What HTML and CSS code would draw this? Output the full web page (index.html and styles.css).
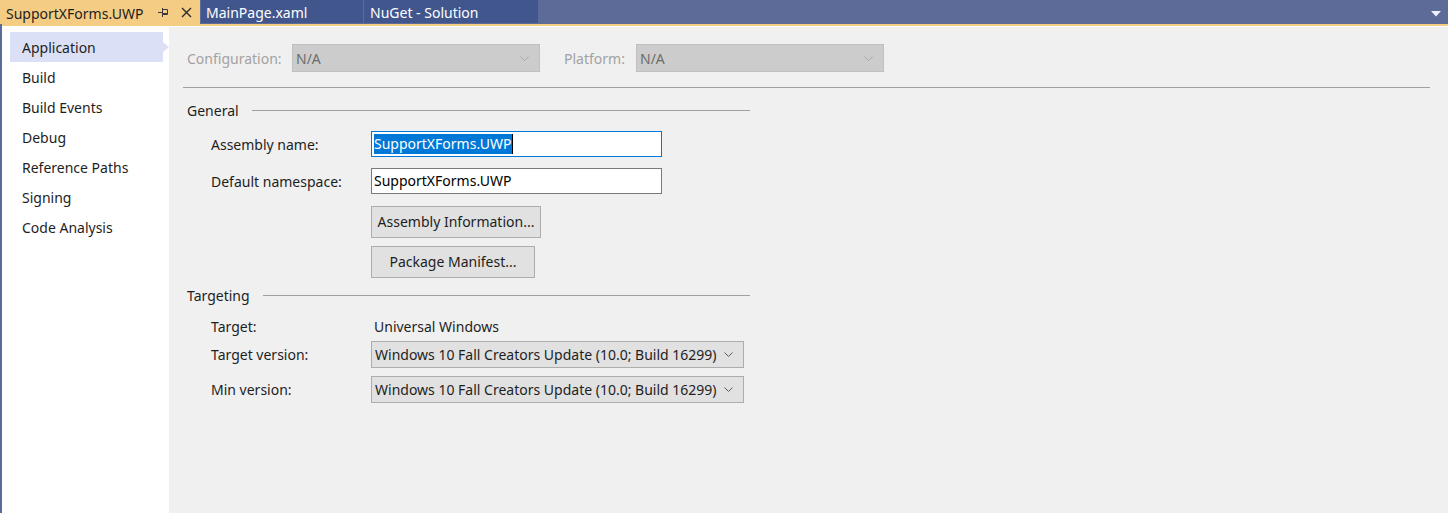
FILE: index.html
```html
<!DOCTYPE html>
<html lang="en">
<head>
    <meta charset="UTF-8">
    <title>SupportXForms.UWP</title>
    <link rel="stylesheet" href="styles.css">
</head>
<body>

    <div class="tabbar">
        <div class="tab tab-active">
            <span class="tab-title">SupportXForms.UWP</span>
            <svg class="tab-pin" width="11" height="10" viewBox="0 0 11 10">
                <path d="M0 5.5H4M4.5 1V10M4.5 2.5H9.5V7.5H4.5M5 6.5H9.5" stroke="#3b3b3b" stroke-width="1" fill="none"/>
            </svg>
            <svg class="tab-close" width="11" height="11" viewBox="0 0 11 11">
                <path d="M1 1L10 10M10 1L1 10" stroke="#2b2b2b" stroke-width="1.4" fill="none"/>
            </svg>
        </div>
        <div class="tab tab-main">MainPage.xaml</div>
        <div class="tab tab-nuget">NuGet - Solution</div>
        <div class="tabbar-fill"></div>
        <svg class="tab-menu" width="10" height="6" viewBox="0 0 10 6">
            <path d="M0 0H10L5 5.5Z" fill="#eef1ff"/>
        </svg>
    </div>

    <div class="main">
        <div class="nav">
            <div class="nav-item nav-selected">Application</div>
            <div class="nav-item">Build</div>
            <div class="nav-item">Build Events</div>
            <div class="nav-item">Debug</div>
            <div class="nav-item">Reference Paths</div>
            <div class="nav-item">Signing</div>
            <div class="nav-item">Code Analysis</div>
        </div>

        <div class="content">
            <div class="config-row">
                <span class="label-disabled">Configuration:</span>
                <div class="select select-disabled">
                    <span>N/A</span>
                    <svg class="chevron" width="9" height="5" viewBox="0 0 9 5"><path d="M0.5 0.5L4.5 4.5L8.5 0.5" stroke="#a8a8a8" fill="none"/></svg>
                </div>
                <span class="label-disabled label-platform">Platform:</span>
                <div class="select select-disabled">
                    <span>N/A</span>
                    <svg class="chevron" width="9" height="5" viewBox="0 0 9 5"><path d="M0.5 0.5L4.5 4.5L8.5 0.5" stroke="#a8a8a8" fill="none"/></svg>
                </div>
            </div>
            <div class="rule"></div>

            <div class="section">
                <div class="section-head">
                    <span>General</span>
                    <div class="section-line"></div>
                </div>
                <div class="row row-assembly">
                    <div class="row-label">Assembly name:</div>
                    <div class="textbox textbox-focus"><span class="selected-text">SupportXForms.UWP</span><span class="caret"></span></div>
                </div>
                <div class="row row-namespace">
                    <div class="row-label">Default namespace:</div>
                    <div class="textbox">SupportXForms.UWP</div>
                </div>
                <div class="row row-button1">
                    <div class="row-label"></div>
                    <div class="button button-info">Assembly Information...</div>
                </div>
                <div class="row row-button2">
                    <div class="row-label"></div>
                    <div class="button button-manifest">Package Manifest...</div>
                </div>

                <div class="section-head section-targeting">
                    <span>Targeting</span>
                    <div class="section-line"></div>
                </div>
                <div class="row row-target">
                    <div class="row-label">Target:</div>
                    <div class="row-value">Universal Windows</div>
                </div>
                <div class="row row-version">
                    <div class="row-label">Target version:</div>
                    <div class="select select-version">
                        <span>Windows 10 Fall Creators Update (10.0; Build 16299)</span>
                        <svg class="chevron" width="9" height="5" viewBox="0 0 9 5"><path d="M0.5 0.5L4.5 4.5L8.5 0.5" stroke="#5a5a5a" fill="none"/></svg>
                    </div>
                </div>
                <div class="row row-min">
                    <div class="row-label">Min version:</div>
                    <div class="select select-version">
                        <span>Windows 10 Fall Creators Update (10.0; Build 16299)</span>
                        <svg class="chevron" width="9" height="5" viewBox="0 0 9 5"><path d="M0.5 0.5L4.5 4.5L8.5 0.5" stroke="#5a5a5a" fill="none"/></svg>
                    </div>
                </div>
            </div>
        </div>
    </div>

</body>
</html>
```

FILE: styles.css
```css
* {
    margin: 0;
    padding: 0;
    box-sizing: border-box;
}
html, body {
    height: 100%;
}
body {
    font: 14px "Noto Sans", "Open Sans", sans-serif;
    color: #1e1e1e;
    background: #5d6b99;
    display: flex;
    flex-direction: column;
    overflow: hidden;
}

/***************************************************/

.tabbar {
    height: 24px;
    display: flex;
    align-items: flex-start;
    background: #5d6b99;
    flex-shrink: 0;
}
.tab {
    height: 23px;
    line-height: 25px;
    white-space: nowrap;
}
.tab-active {
    background: #f5cc84;
    width: 200px;
    height: 24px;
    padding-left: 6px;
    display: flex;
    align-items: center;
}
.tab-title {
    color: #1e1e1e;
    padding-top: 2px;
}
.tab-pin {
    margin-left: 14px;
}
.tab-close {
    margin-left: 12px;
}
.tab-main {
    background: #40568d;
    color: #ffffff;
    width: 162px;
    margin-left: 1px;
    padding-left: 5px;
}
.tab-nuget {
    background: #40568d;
    color: #ffffff;
    width: 174px;
    margin-left: 1px;
    padding-left: 6px;
}
.tabbar-fill {
    flex: 1;
}
.tab-menu {
    margin: 11px 7px 0 0;
}

/***************************************************/

.main {
    flex: 1;
    display: flex;
    border-top: 2px solid #f5cc84;
    margin-left: 2px;
}
.nav {
    width: 167px;
    background: #ffffff;
    padding: 5px 0 0 8px;
    border-top: 1px solid #ffffff;
}
.nav-item {
    height: 30px;
    line-height: 31px;
    padding-left: 12px;
    width: 153px;
    position: relative;
}
.nav-selected {
    background: #dce0f7;
}
.nav-selected::after {
    content: "";
    position: absolute;
    right: -6px;
    top: 10px;
    border-left: 6px solid #dce0f7;
    border-top: 5px solid transparent;
    border-bottom: 5px solid transparent;
}

/***************************************************/

.content {
    flex: 1;
    background: #f0f0f0;
    padding: 17px 18px 0 14px;
    border-top: 1px solid #ffffff;
}
.config-row {
    display: flex;
    align-items: center;
    padding-left: 4px;
    height: 28px;
}
.label-disabled {
    color: #a2a2a2;
    width: 105px;
}
.label-platform {
    width: 72px;
    margin-left: 24px;
}
.select {
    display: flex;
    align-items: center;
    justify-content: space-between;
    border: 1px solid #adadad;
    background: #e1e1e1;
    padding: 0 10px 0 3px;
}
.select-disabled {
    width: 248px;
    height: 28px;
    background: #cccccc;
    border-color: #bfbfbf;
    color: #6d6d6d;
}
.rule {
    height: 1px;
    background: #a0a0a0;
    margin-top: 15px;
}

.section {
    width: 567px;
}
.section-head {
    display: flex;
    align-items: center;
    height: 20px;
    margin-top: 12px;
    padding-left: 4px;
}
.section-line {
    flex: 1;
    height: 1px;
    background: #a0a0a0;
    margin-left: 13px;
}
.section-targeting {
    margin-top: 7px;
}
.row {
    display: flex;
    align-items: center;
    padding-left: 28px;
}
.row-label {
    width: 160px;
}
.textbox {
    width: 291px;
    height: 26px;
    line-height: 24px;
    border: 1px solid #7a7a7a;
    background: #ffffff;
    padding-left: 2px;
    color: #000000;
}
.textbox-focus {
    border-color: #0078d7;
    display: flex;
    align-items: center;
}
.selected-text {
    background: #0078d7;
    color: #ffffff;
    line-height: 20px;
}
.caret {
    width: 1px;
    height: 20px;
    background: #000000;
}
.row-assembly {
    margin-top: 11px;
}
.row-namespace {
    margin-top: 11px;
}
.button {
    height: 32px;
    line-height: 30px;
    border: 1px solid #adadad;
    background: #e1e1e1;
    text-align: center;
}
.button-info {
    width: 170px;
}
.button-manifest {
    width: 164px;
}
.row-button1 {
    margin-top: 12px;
}
.row-button2 {
    margin-top: 8px;
}
.row-target {
    margin-top: 11px;
    height: 20px;
}
.row-value {
    padding-left: 3px;
}
.select-version {
    width: 373px;
    height: 27px;
    padding-left: 3px;
}
.row-version {
    margin-top: 5px;
}
.row-min {
    margin-top: 8px;
}
```
